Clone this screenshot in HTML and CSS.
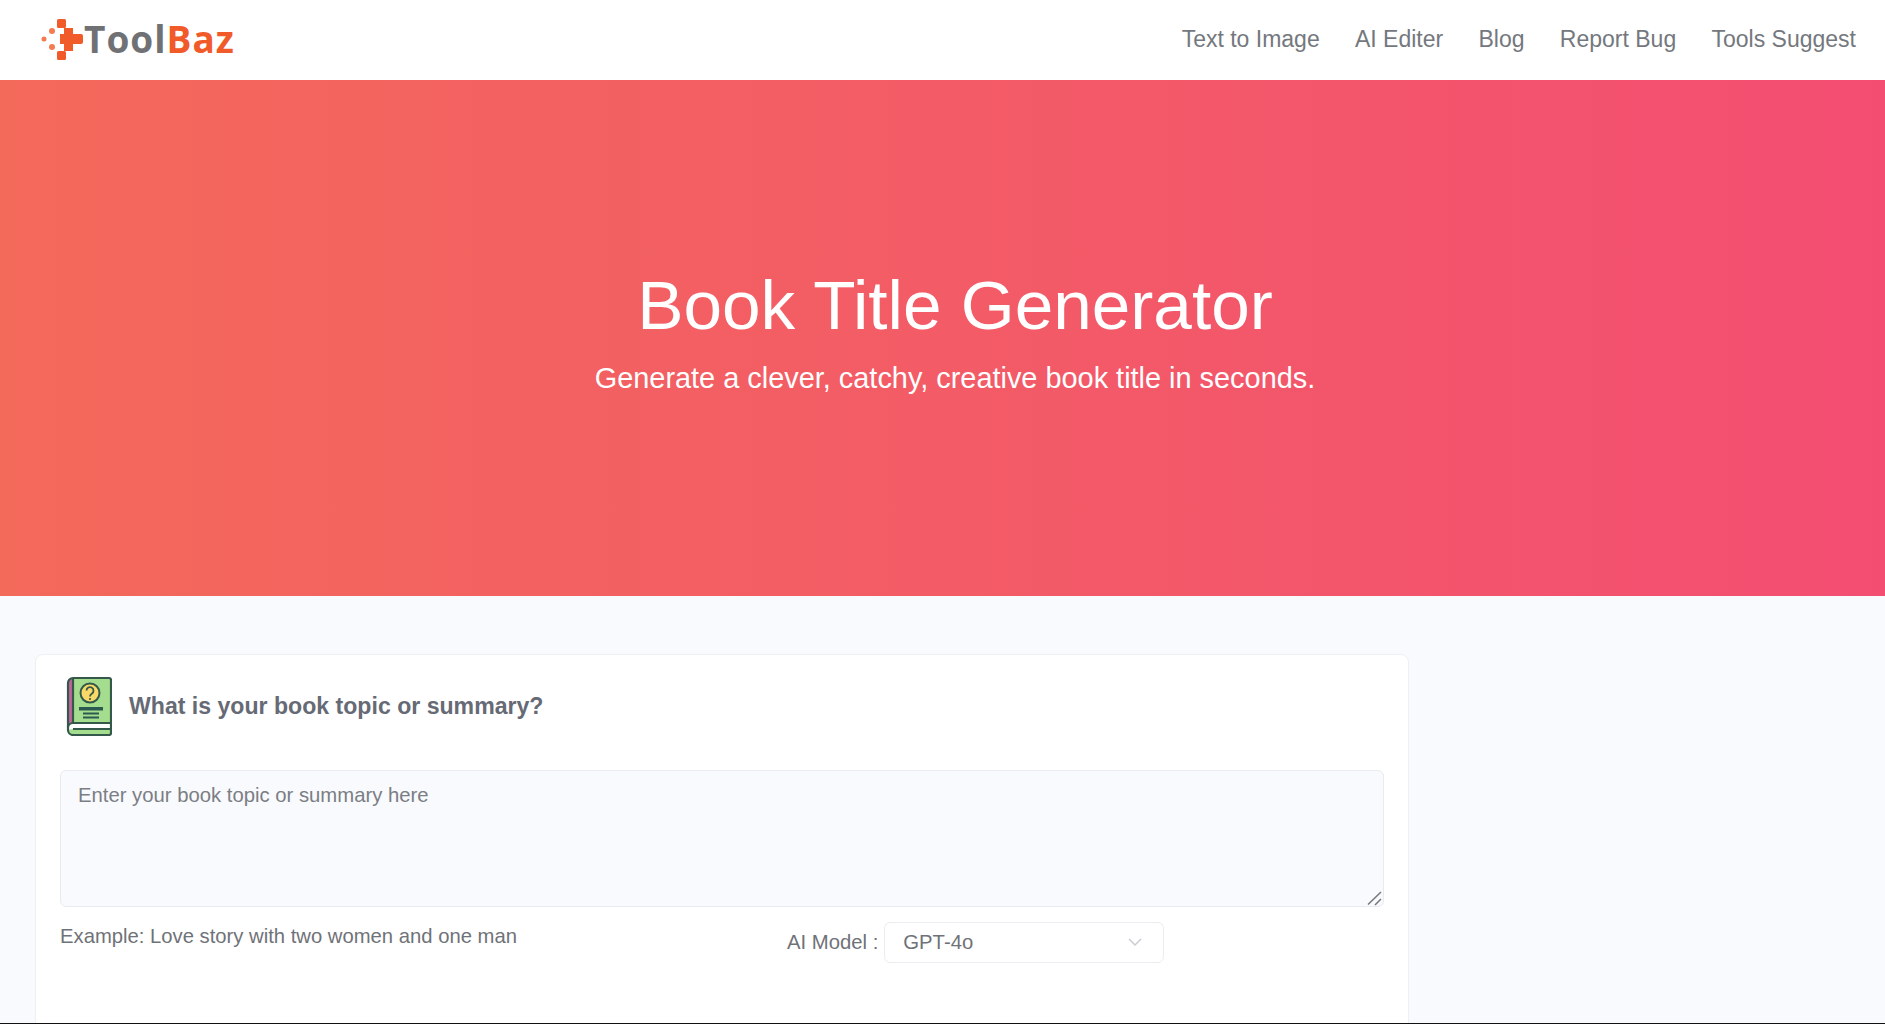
FILE: index.html
```html
<!DOCTYPE html>
<html lang="en">
<head>
  <meta charset="UTF-8">
  <title>Book Title Generator</title>
  <link rel="stylesheet" href="styles.css">
</head>
<body>

  <header class="topbar">
    <a class="logo" href="#">
      <svg class="logo-icon" width="44" height="45" viewBox="0 0 44 45">
        <rect x="17" y="3" width="9" height="9" rx="1.500" fill="#f15a29"/>
        <rect x="17" y="35" width="9" height="9" rx="1.500" fill="#f15a29"/>
        <path d="M24 12h9v6h8a2 2 0 0 1 2 2v6a2 2 0 0 1-2 2h-8v7h-9v-7h-4v-10h4z" fill="#f15a29"/>
        <circle cx="12" cy="15" r="3" fill="#f47b50"/>
        <circle cx="12" cy="31" r="3" fill="#f47b50"/>
        <circle cx="4" cy="23" r="2.500" fill="#f47b50"/>
      </svg>
      <span class="logo-text">Tool<b>Baz</b></span>
    </a>
    <nav class="nav">
      <a href="#">Text to Image</a>
      <a href="#">AI Editer</a>
      <a href="#">Blog</a>
      <a href="#">Report Bug</a>
      <a href="#">Tools Suggest</a>
    </nav>
  </header>

  <section class="hero">
    <h1>Book Title Generator</h1>
    <p>Generate a clever, catchy, creative book title in seconds.</p>
  </section>

  <main class="content">
    <div class="card">
      <div class="card-head">
        <svg class="book-icon" width="46" height="60" viewBox="0 0 46 60">
          <path d="M7 2h36a2 2 0 0 1 2 2v45H7z" fill="#a5dd8e"/>
          <path d="M2 7a5 5 0 0 1 5-5v45a5 5 0 0 0-5 4z" fill="#c2659c"/>
          <path d="M7 53h38v6H7a5 5 0 0 1-5-5z" fill="#a5dd8e"/>
          <path d="M7 47h38v6H7a3 3 0 0 1 0-6z" fill="#fff"/>
          <path d="M43 2a2 2 0 0 1 2 2v53a2 2 0 0 1-2 2H7a5 5 0 0 1-5-5V7a5 5 0 0 1 5-5zM7 2v45M2 52a5 5 0 0 1 5-5h38M7 53h38" fill="none" stroke="#34584a" stroke-width="2.200"/>
          <circle cx="24" cy="17" r="9.500" fill="#f8d968" stroke="#34584a" stroke-width="2"/>
          <path d="M20.500 14.500a3.500 3.500 0 1 1 5.500 3c-1.500 1-2 1.500-2 3" fill="none" stroke="#34584a" stroke-width="1.800"/>
          <circle cx="24" cy="23" r="1.100" fill="#34584a"/>
          <path d="M13 31h24v3.500H13z" fill="#2c5a50"/>
          <path d="M17 37.500h16M17 41.500h16" stroke="#2c5a50" stroke-width="2.200"/>
        </svg>
        <h2>What is your book topic or summary?</h2>
      </div>
      <div class="topic-wrap">
        <textarea class="topic" placeholder="Enter your book topic or summary here"></textarea>
        <svg class="grip" width="16" height="16" viewBox="0 0 16 16">
          <path d="M1 14.500L14 2M8 15l6-6" fill="none" stroke="#74777c" stroke-width="1.500"/>
        </svg>
      </div>
      <div class="options">
        <div class="example">Example: Love story with two women and one man</div>
        <div class="model">
          <label for="model">AI Model :</label>
          <div class="select" id="model">
            <span>GPT-4o</span>
            <svg width="14" height="9" viewBox="0 0 14 9"><path d="M1 1l6 6 6-6" fill="none" stroke="#c9ccd1" stroke-width="1.500"/></svg>
          </div>
        </div>
      </div>
    </div>
  </main>

  <div class="bottom-line"></div>

</body>
</html>
```

FILE: styles.css
```css
html, body {
  height: 100%;
}

body {
  margin: 0;
  font-family: 'Liberation Sans', Arial, sans-serif;
  background: #f9fafd;
  color: #6f7278;
  overflow: hidden;
  display: flex;
  flex-direction: column;
}

a {
  text-decoration: none;
}

.topbar {
  height: 80px;
  flex: none;
  background: #fff;
  display: flex;
  align-items: center;
  justify-content: space-between;
  padding: 0 29px 2px 40px;
  box-sizing: border-box;
}

.logo {
  display: flex;
  align-items: center;
  margin-top: -2px;
}

.logo-text {
  font-family: 'Open Sans', sans-serif;
  font-size: 37px;
  font-weight: 700;
  letter-spacing: 1px;
  color: #707174;
}

.logo-text b {
  font-weight: 700;
  color: #f15a29;
}

.nav {
  display: flex;
  gap: 35.300px;
}

.nav a {
  font-size: 23px;
  color: #74787e;
}

.hero {
  height: 516px;
  flex: none;
  background: linear-gradient(90deg, #f3695a 0%, #f34e72 100%);
  color: #fff;
  text-align: center;
  box-sizing: border-box;
  padding: 181px 0 0 25px;
}

.hero h1 {
  margin: 0;
  font-size: 69.300px;
  font-weight: 400;
  line-height: 88px;
}

.hero p {
  margin: 11px 0 0;
  font-size: 28.900px;
  line-height: 36px;
}

.content {
  flex: 1;
  padding: 58px 0 0 35px;
}

.card {
  width: 1374px;
  height: 400px;
  box-sizing: border-box;
  background: #fff;
  border: 1px solid #eff0f3;
  border-radius: 8px;
  padding: 21px 24px 0;
}

.card-head {
  display: flex;
  align-items: center;
  gap: 17px;
  padding-left: 6px;
  margin-bottom: 34px;
}

.card-head h2 {
  margin: 0;
  font-size: 23.100px;
  font-weight: 700;
  color: #666a75;
}

.topic-wrap {
  position: relative;
}

.topic {
  display: block;
  width: 100%;
  height: 137px;
  box-sizing: border-box;
  background: #f9fafd;
  border: 1px solid #e9ebef;
  border-radius: 6px;
  padding: 13px 17px;
  font-family: inherit;
  font-size: 20.300px;
  color: #6f7278;
  resize: none;
}

.topic::placeholder {
  color: #7b7e84;
  opacity: 1;
}

.grip {
  position: absolute;
  right: 1px;
  bottom: 1px;
}

.options {
  display: flex;
  align-items: flex-start;
  margin-top: 15px;
}

.example {
  width: 727px;
  padding-top: 1px;
  font-size: 20.250px;
  line-height: 26px;
  flex: none;
}

.model {
  display: flex;
  align-items: center;
  gap: 6px;
  font-size: 20.300px;
}

.select {
  width: 280px;
  height: 41px;
  box-sizing: border-box;
  background: #fff;
  border: 1px solid #ebedf0;
  border-radius: 6px;
  display: flex;
  align-items: center;
  justify-content: space-between;
  padding: 0 21px 0 18px;
}

.bottom-line {
  position: absolute;
  left: 0;
  right: 0;
  bottom: 0;
  height: 1px;
  background: #111;
}
```
